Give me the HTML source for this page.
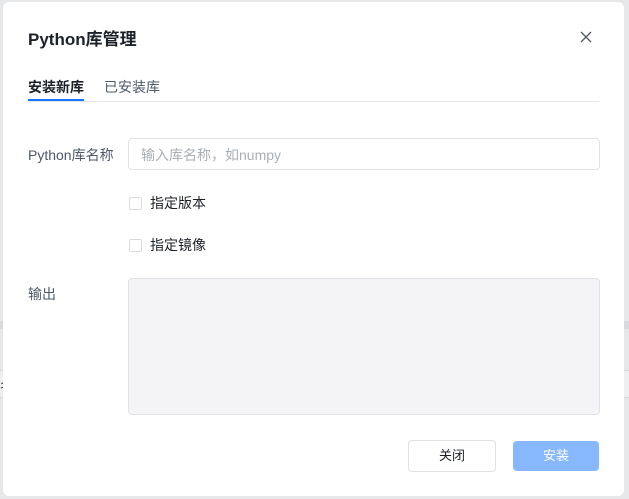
<!DOCTYPE html>
<html><head><meta charset="utf-8"><style>
*{box-sizing:border-box;margin:0;padding:0}
body{width:629px;height:499px;background:#e6e7e9;position:relative;overflow:hidden;font-family:"Liberation Sans","Noto Sans CJK SC",sans-serif;}
.bg1{position:absolute;left:0;top:321px;width:629px;height:8px;background:#d8d9dc}
.bg2{position:absolute;left:0;top:370px;width:629px;height:28px;background:#eeeff1;border-top:1px solid #d8d9dc;border-bottom:1px solid #d8d9dc}
.dlg{position:absolute;left:3px;top:2px;width:621px;height:494px;background:#fff;border-radius:6px}
.a{position:absolute}
.title{left:25px;top:23px;font-size:17px;font-weight:bold;color:#1d2129}
.tab{top:75px;font-size:14px}
.cb{width:13px;height:13px;border:1px solid #d9dbe0;border-radius:2px;background:#fff}
.lbl{font-size:14px;color:#4e5969}
.txt{font-size:14px;color:#1d2129}
</style></head><body>
<div class="bg1"></div><div class="bg2"></div>
<div class="a" style="left:0;top:376px;font-size:13px;color:#333">名</div>
<div class="dlg">
<div class="a title">Python库管理</div>
<svg class="a" style="left:577px;top:29px" width="12" height="12" viewBox="0 0 12 12"><path d="M1 1L11 11M11 1L1 11" stroke="#4e5969" stroke-width="1.3"/></svg>
<div class="a tab" style="left:25px;color:#1d2129;font-weight:bold">安装新库</div>
<div class="a tab" style="left:101px;color:#4e5969">已安装库</div>
<div class="a" style="left:25px;top:99px;width:571px;height:1px;background:#e5e6eb"></div>
<div class="a" style="left:25px;top:97px;width:56px;height:2px;background:#1677ff"></div>
<div class="a lbl" style="left:25px;top:143px">Python库名称</div>
<div class="a" style="left:125px;top:136px;width:472px;height:32px;border:1px solid #e0e2e7;border-radius:4px;font-size:14px;color:#a9aeb8;padding:6px 12px">输入库名称，如numpy</div>
<div class="a cb" style="left:126px;top:195px"></div>
<div class="a txt" style="left:147px;top:191px">指定版本</div>
<div class="a cb" style="left:126px;top:237px"></div>
<div class="a txt" style="left:147px;top:233px">指定镜像</div>
<div class="a lbl" style="left:25px;top:282px">输出</div>
<div class="a" style="left:125px;top:276px;width:472px;height:137px;background:#f4f4f6;border:1px solid #e0e2e7;border-radius:4px"></div>
<div class="a" style="left:405px;top:438px;width:88px;height:32px;border:1px solid #dfe1e6;border-radius:4px;font-size:13px;color:#1d2129;text-align:center;line-height:30px">关闭</div>
<div class="a" style="left:510px;top:439px;width:86px;height:30px;background:#87b8fd;border-radius:4px;font-size:13px;color:#fff;text-align:center;line-height:30px">安装</div>
</div>
</body></html>
